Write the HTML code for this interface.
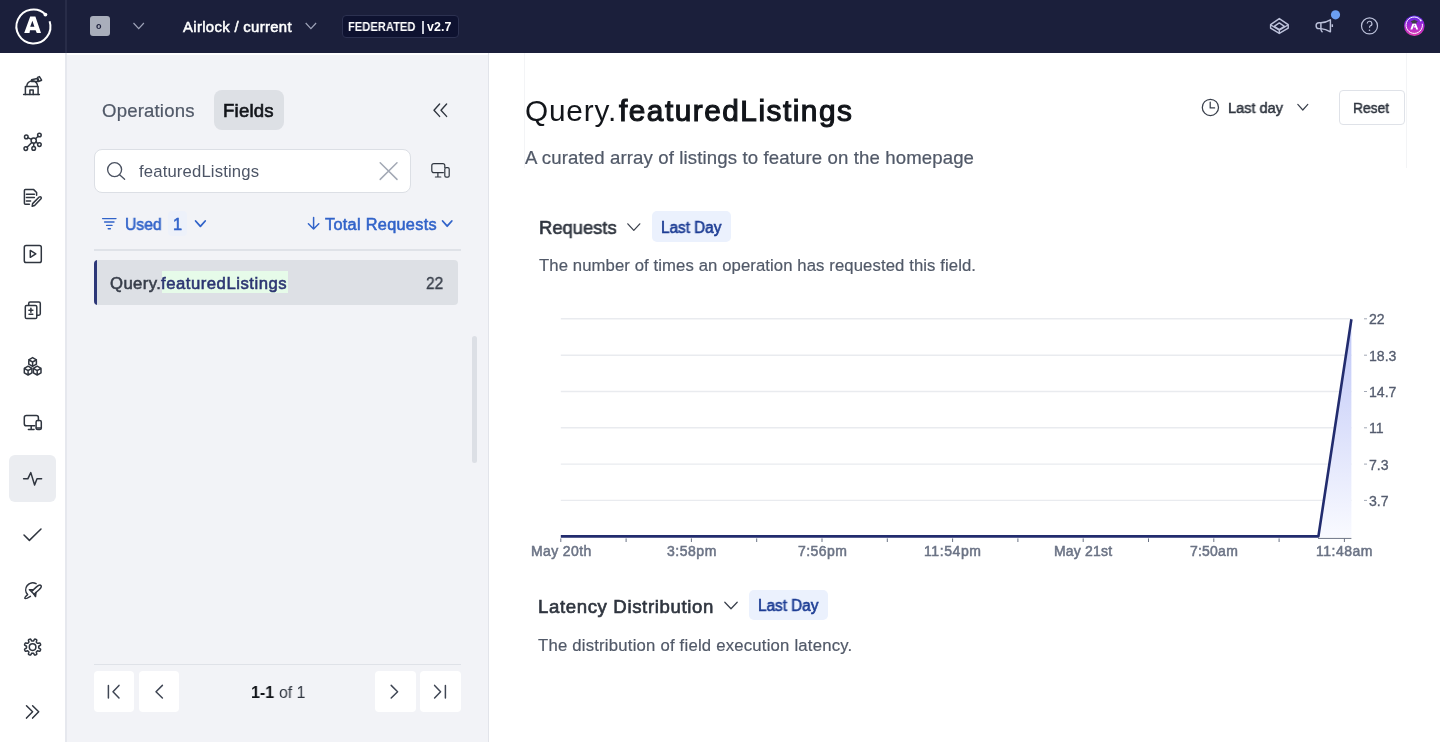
<!DOCTYPE html>
<html><head><meta charset="utf-8">
<style>
*{box-sizing:border-box;margin:0;padding:0}
html,body{width:1440px;height:742px;overflow:hidden;background:#fff;font-family:"Liberation Sans",sans-serif}
.a{position:absolute}
.t{position:absolute;white-space:pre;line-height:1;font-family:"Liberation Sans",sans-serif;will-change:transform}
svg{position:absolute;overflow:visible}
</style></head><body>
<!-- header -->
<div class="a" style="left:0;top:0;width:1440px;height:53px;background:#1b1f3b"></div>
<div class="a" style="left:65px;top:0;width:2px;height:53px;background:#282c48"></div>
<!-- apollo logo -->
<svg style="left:0;top:0" width="66" height="53" viewBox="0 0 66 53">
  <path d="M45.6 14.6 A17 17 0 1 0 49.6 21.2" fill="none" stroke="#fff" stroke-width="2"/>
  <circle cx="45.4" cy="14.6" r="1.9" fill="#fff"/>
  <path d="M30.2 16.6 L35.4 16.6 L41 33 L36.8 33 L35.6 30.2 L30 30.2 L29.5 33 L24.2 33 Z M32.4 20.8 L34.4 26.7 L30.2 26.7 Z" fill="#fff" fill-rule="evenodd"/>
</svg>
<!-- org box -->
<div class="a" style="left:90px;top:16px;width:20px;height:20px;border-radius:3px;background:#a9aebb"></div>
<svg style="left:0;top:0" width="1440" height="53">
  <path d="M133.5 23 L138.7 28.6 L143.9 23" fill="none" stroke="#9ea3b8" stroke-width="1.2"/>
  <path d="M305.7 23 L310.9 28.6 L316.1 23" fill="none" stroke="#9ea3b8" stroke-width="1.2"/>
</svg>
<!-- federated badge -->
<div class="a" style="left:342px;top:14.5px;width:117px;height:23px;border-radius:4px;background:#0e1230;border:1px solid #2c3150"></div>
<div class="a" style="left:422px;top:20.5px;width:2px;height:13px;background:#c9ccd6"></div>
<!-- right header icons -->
<svg style="left:0;top:0" width="1440" height="53">
  <g fill="none" stroke="#bcc1da" stroke-width="1.45" stroke-linejoin="round">
    <path d="M1279.3 18.6 L1288.2 24.7 V28.2 L1279.3 33.4 L1270.6 28.2 V24.7 Z"/>
    <path d="M1270.8 25 L1279.3 30.2 L1288 25 M1279.3 30.2 V33.2"/>
    <path d="M1279.3 22.9 L1284.4 26.3 L1279.3 29.6 L1274.2 26.3 Z"/>
    <path d="M1320.9 22.8 Q1325.6 22.6 1330.4 19.8 V31.8 Q1325.6 28.9 1320.9 28.6 Z"/>
    <path d="M1320.9 22.8 H1319 A2.9 2.9 0 0 0 1319 28.6 H1320.9"/>
    <path d="M1320.8 28.8 Q1321 31 1322.5 32.3"/>
    <path d="M1332.3 24.3 V27" stroke-width="1.5"/>
    <circle cx="1369.5" cy="25.9" r="8" stroke-width="1.2"/>
    <path d="M1367.2 23.6 A2.35 2.35 0 1 1 1370.4 25.8 Q1369.5 26.3 1369.5 27.8" stroke-width="1.2"/>
  </g>
  <circle cx="1369.5" cy="30.3" r="0.8" fill="#bcc1da"/>
  <circle cx="1335.5" cy="14.8" r="4.6" fill="#6b9ef2"/>
  <defs><linearGradient id="av" x1="0" y1="0" x2="0" y2="1"><stop offset="0" stop-color="#5b2ae8"/><stop offset="0.5" stop-color="#a524d2"/><stop offset="1" stop-color="#e040b0"/></linearGradient></defs>
  <circle cx="1414.3" cy="25.7" r="10.3" fill="url(#av)"/>
  <path d="M1421 20.6 A8.2 8.2 0 1 0 1422.3 23.8" fill="none" stroke="#fff" stroke-width="1"/>
  <circle cx="1420.7" cy="20.4" r="0.9" fill="#fff"/>
  <path d="M1412.6 23.2 L1415.8 23.2 L1418.2 29.4 L1416.2 29.4 L1415.6 27.6 L1413.6 27.6 L1414 26.2 L1415 26.2 L1414.2 24.4 L1412.4 29.4 L1410.4 29.4 Z" fill="#fff"/>
  <path d="M1410.4 21.4 L1414.2 19.8 L1418 21.4 L1416.6 22.2 V23.4 H1411.8 V22.2 Z" fill="#3c3c48"/>
</svg>

<!-- sidebar -->
<div class="a" style="left:0;top:53px;width:65px;height:689px;background:#fff"></div>
<div class="a" style="left:65px;top:53px;width:2px;height:689px;background:#e6e8ee"></div>
<div class="a" style="left:9px;top:455px;width:47px;height:47px;border-radius:6px;background:#ebedf1"></div>
<svg style="left:0;top:0" width="66" height="742">
 <g fill="none" stroke="#2f353f" stroke-width="1.5" stroke-linecap="round" stroke-linejoin="round">
  <!-- observatory y0=72 -->
  <g transform="translate(20 72)">
    <path d="M3.6 22.4 H19.4"/>
    <path d="M5.4 22.4 V14.6 H18.1 V22.4"/>
    <path d="M9.9 22.4 V18 H13.2 V22.4"/>
    <path d="M6.8 14.6 A5.6 5.6 0 0 1 16.2 10.4"/>
    <path d="M17.6 14.6 A5.6 5.6 0 0 0 16.2 10.4"/>
    <path d="M11.4 9.6 L11.6 7.8 L17.2 6.6 L18.2 9.6 Z"/>
    <path d="M17.6 5.4 L19.4 4.6 L21.6 8.2 L19 9.4 Z"/>
  </g>
  <!-- graph y0=129 -->
  <g transform="translate(20 129)">
    <circle cx="13.7" cy="11.6" r="2.6"/>
    <circle cx="6.3" cy="7.9" r="1.8"/>
    <circle cx="19.4" cy="6.0" r="1.8"/>
    <circle cx="19.4" cy="15.6" r="1.8"/>
    <circle cx="13.7" cy="19.4" r="1.8"/>
    <circle cx="5.8" cy="19.6" r="1.8"/>
    <path d="M7.9 8.7 L11.4 10.4 M15.6 9.7 L18.1 7.3 M16.2 12.8 L17.7 14.7 M13.7 14.2 V17.6 M11.8 13.5 L7.1 18.3"/>
  </g>
  <!-- doc edit y0=185 -->
  <g transform="translate(20 185)">
    <path d="M9.4 19.3 H5.4 Q4.4 19.3 4.4 18.3 V5.6 Q4.4 4.6 5.4 4.6 H13.7 L16.6 7.5 V10.2"/>
    <path d="M6.4 9.3 H14.4 M6.4 12.6 H14.4 M6.4 16.1 H10.6"/>
    <path d="M12.2 21.2 L12.6 18.6 L19.2 12 Q20.2 11.3 21 12.1 Q21.7 13 21 13.8 L14.6 20.6 Z"/>
  </g>
  <!-- play y0=241 -->
  <g transform="translate(20 241)">
    <rect x="4.3" y="4.6" width="17" height="16.9" rx="1.8"/>
    <path d="M10.3 9.4 L15.8 12.9 L10.3 16.3 Z"/>
  </g>
  <!-- copy y0=297 -->
  <g transform="translate(20 297)">
    <path d="M8.7 8.3 V6.4 Q8.7 5 10.1 5 H18.9 Q20.3 5 20.3 6.4 V16.8 Q20.3 18.2 18.9 18.2 H16.8"/>
    <rect x="5.3" y="8.4" width="11.5" height="13.2" rx="1.4"/>
    <path d="M8.9 13.3 H12.9 M10.9 11.3 V15.3 M9 17.3 H12.8"/>
  </g>
  <!-- cubes y0=354 -->
  <g transform="translate(20 354)">
    <path d="M12.6 3.6 L16.4 5.8 V10.2 L12.6 12.4 L8.8 10.2 V5.8 Z M8.8 5.8 L12.6 8 L16.4 5.8 M12.6 8 V12.4"/>
    <path d="M8.1 12.2 L11.9 14.4 V18.8 L8.1 21 L4.3 18.8 V14.4 Z M4.3 14.4 L8.1 16.6 L11.9 14.4 M8.1 16.6 V21"/>
    <path d="M17.2 12.2 L21 14.4 V18.8 L17.2 21 L13.4 18.8 V14.4 Z M13.4 14.4 L17.2 16.6 L21 14.4 M17.2 16.6 V21"/>
  </g>
  <!-- monitor y0=410 -->
  <g transform="translate(20 410)">
    <path d="M14.8 15.8 H6.4 Q4.3 15.8 4.3 13.7 V7.7 Q4.3 5.6 6.4 5.6 H16.3 Q18.4 5.6 18.4 7.7 V10.4"/>
    <path d="M11.2 15.8 V19.6 M8.4 19.6 H14"/>
    <rect x="16.1" y="10.5" width="5.2" height="9.1" rx="1.6"/>
    <path d="M16.4 18 H21"/>
  </g>
  <!-- activity -->
  <path d="M23.6 478.8 H27.8 L30.8 472.6 L34.6 485 L37 478.8 H41.6"/>
  <!-- check -->
  <path d="M24 535 L29.4 540.4 L41 529"/>
  <!-- rocket y0=578 -->
  <g transform="translate(20 578)">
    <path d="M16.1 5.7 A7 7 0 0 0 7.6 16.6"/>
    <path d="M7.2 17 Q4.4 19.4 4.9 20.4 Q5.6 21.3 10.4 18.3"/>
    <g transform="translate(16.6 11.4) rotate(-42)">
      <path d="M-5.2 -1.9 H1.6 Q5.8 -1.9 5.8 0 Q5.8 1.9 1.6 1.9 H-5.2 Z"/>
      <path d="M-2.6 -1.9 L-5.6 -4.6 L-5.2 -1.9 M-2.6 1.9 L-5.6 4.6 L-5.2 1.9"/>
    </g>
  </g>
  <!-- gear y0=634 -->
  <g transform="translate(20 634)">
    <circle cx="12.6" cy="13.1" r="3.3"/>
    <path d="M18.70 13.10 L18.70 13.25 L18.70 13.40 L18.69 13.55 L18.69 13.70 L18.71 13.85 L18.79 14.02 L19.03 14.22 L19.54 14.48 L20.13 14.79 L20.48 15.07 L20.59 15.31 L20.60 15.53 L20.56 15.73 L20.50 15.93 L20.43 16.12 L20.35 16.31 L20.27 16.50 L20.18 16.69 L20.08 16.87 L19.97 17.04 L19.82 17.19 L19.57 17.28 L19.12 17.23 L18.49 17.03 L17.94 16.86 L17.63 16.83 L17.46 16.89 L17.33 16.99 L17.23 17.09 L17.12 17.20 L17.02 17.31 L16.92 17.42 L16.81 17.52 L16.70 17.62 L16.59 17.73 L16.49 17.83 L16.39 17.96 L16.33 18.13 L16.36 18.44 L16.53 18.99 L16.73 19.62 L16.78 20.07 L16.69 20.32 L16.54 20.47 L16.37 20.58 L16.19 20.68 L16.00 20.77 L15.81 20.85 L15.62 20.93 L15.43 21.00 L15.23 21.06 L15.03 21.10 L14.81 21.09 L14.57 20.98 L14.29 20.63 L13.98 20.04 L13.72 19.53 L13.52 19.29 L13.35 19.21 L13.20 19.19 L13.05 19.19 L12.90 19.20 L12.75 19.20 L12.60 19.20 L12.45 19.20 L12.30 19.20 L12.15 19.19 L12.00 19.19 L11.85 19.21 L11.68 19.29 L11.48 19.53 L11.22 20.04 L10.91 20.63 L10.63 20.98 L10.39 21.09 L10.17 21.10 L9.97 21.06 L9.77 21.00 L9.58 20.93 L9.39 20.85 L9.20 20.77 L9.01 20.68 L8.83 20.58 L8.66 20.47 L8.51 20.32 L8.42 20.07 L8.47 19.62 L8.67 18.99 L8.84 18.44 L8.87 18.13 L8.81 17.96 L8.71 17.83 L8.61 17.73 L8.50 17.62 L8.39 17.52 L8.28 17.42 L8.18 17.31 L8.08 17.20 L7.97 17.09 L7.87 16.99 L7.74 16.89 L7.57 16.83 L7.26 16.86 L6.71 17.03 L6.08 17.23 L5.63 17.28 L5.38 17.19 L5.23 17.04 L5.12 16.87 L5.02 16.69 L4.93 16.50 L4.85 16.31 L4.77 16.12 L4.70 15.93 L4.64 15.73 L4.60 15.53 L4.61 15.31 L4.72 15.07 L5.07 14.79 L5.66 14.48 L6.17 14.22 L6.41 14.02 L6.49 13.85 L6.51 13.70 L6.51 13.55 L6.50 13.40 L6.50 13.25 L6.50 13.10 L6.50 12.95 L6.50 12.80 L6.51 12.65 L6.51 12.50 L6.49 12.35 L6.41 12.18 L6.17 11.98 L5.66 11.72 L5.07 11.41 L4.72 11.13 L4.61 10.89 L4.60 10.67 L4.64 10.47 L4.70 10.27 L4.77 10.08 L4.85 9.89 L4.93 9.70 L5.02 9.51 L5.12 9.33 L5.23 9.16 L5.38 9.01 L5.63 8.92 L6.08 8.97 L6.71 9.17 L7.26 9.34 L7.57 9.37 L7.74 9.31 L7.87 9.21 L7.97 9.11 L8.08 9.00 L8.18 8.89 L8.28 8.78 L8.39 8.68 L8.50 8.58 L8.61 8.47 L8.71 8.37 L8.81 8.24 L8.87 8.07 L8.84 7.76 L8.67 7.21 L8.47 6.58 L8.42 6.13 L8.51 5.88 L8.66 5.73 L8.83 5.62 L9.01 5.52 L9.20 5.43 L9.39 5.35 L9.58 5.27 L9.77 5.20 L9.97 5.14 L10.17 5.10 L10.39 5.11 L10.63 5.22 L10.91 5.57 L11.22 6.16 L11.48 6.67 L11.68 6.91 L11.85 6.99 L12.00 7.01 L12.15 7.01 L12.30 7.00 L12.45 7.00 L12.60 7.00 L12.75 7.00 L12.90 7.00 L13.05 7.01 L13.20 7.01 L13.35 6.99 L13.52 6.91 L13.72 6.67 L13.98 6.16 L14.29 5.57 L14.57 5.22 L14.81 5.11 L15.03 5.10 L15.23 5.14 L15.43 5.20 L15.62 5.27 L15.81 5.35 L16.00 5.43 L16.19 5.52 L16.37 5.62 L16.54 5.73 L16.69 5.88 L16.78 6.13 L16.73 6.58 L16.53 7.21 L16.36 7.76 L16.33 8.07 L16.39 8.24 L16.49 8.37 L16.59 8.47 L16.70 8.58 L16.81 8.68 L16.92 8.78 L17.02 8.89 L17.12 9.00 L17.23 9.11 L17.33 9.21 L17.46 9.31 L17.63 9.37 L17.94 9.34 L18.49 9.17 L19.12 8.97 L19.57 8.92 L19.82 9.01 L19.97 9.16 L20.08 9.33 L20.18 9.51 L20.27 9.70 L20.35 9.89 L20.43 10.08 L20.50 10.27 L20.56 10.47 L20.60 10.67 L20.59 10.89 L20.48 11.13 L20.13 11.41 L19.54 11.72 L19.03 11.98 L18.79 12.18 L18.71 12.35 L18.69 12.50 L18.69 12.65 L18.70 12.80 L18.70 12.95 Z"/>
  </g>
  <!-- chevrons y0=699 -->
  <g transform="translate(20 699)">
    <path d="M6.5 6.7 L12.6 12.8 L6.5 19.1 M12.6 6.7 L18.7 12.8 L12.6 19.1"/>
  </g>
 </g>
</svg>

<!-- left panel -->
<div class="a" style="left:67px;top:55px;width:421px;height:687px;background:#f2f3f7"></div>
<div class="a" style="left:487.5px;top:53px;width:1.5px;height:689px;background:#e2e4ea"></div>
<div class="a" style="left:214px;top:89.5px;width:70px;height:40px;border-radius:8px;background:#dde0e5"></div>
<!-- search -->
<div class="a" style="left:94px;top:148.5px;width:317px;height:44px;border-radius:8px;background:#fff;border:1px solid #dcdfe5"></div>
<svg style="left:0;top:0" width="488" height="742">
  <g fill="none" stroke-linecap="round" stroke-linejoin="round">
    <!-- collapse « -->
    <path d="M439.6 104 L434 110.2 L439.6 116.4 M446.6 104 L441 110.2 L446.6 116.4" stroke="#2f353f" stroke-width="1.4"/>
    <!-- search icon -->
    <circle cx="114.6" cy="169.6" r="7" stroke="#4a5160" stroke-width="1.35"/>
    <path d="M119.6 174.8 L124.6 179.2" stroke="#4a5160" stroke-width="1.35"/>
    <!-- X -->
    <path d="M380.2 162.8 L397 179.4 M397 162.8 L380.2 179.4" stroke="#a3a9b5" stroke-width="1.5"/>
    <!-- monitor small -->
    <path d="M443.4 172.6 H434 Q431.8 172.6 431.8 170.4 V165.6 Q431.8 163.6 434 163.6 H442.8 Q444.8 163.6 444.8 165.6 V167.4" stroke="#2f353f" stroke-width="1.2"/>
    <path d="M437.9 172.6 V176.8 M435.4 177 H440.8" stroke="#2f353f" stroke-width="1.2"/>
    <rect x="444.8" y="167.6" width="4.4" height="9.6" rx="1.4" stroke="#2f353f" stroke-width="1.2"/>
    <!-- filter icon -->
    <path d="M102.6 218.6 H116 M104.6 222 H114 M106.6 225.4 H112 M108.2 228.8 H110.4" stroke="#3163c9" stroke-width="1.4"/>
    <!-- used chevron -->
    <path d="M195.6 221 L200.4 226.4 L205.2 221" stroke="#3163c9" stroke-width="1.8"/>
    <!-- arrow down -->
    <path d="M313.6 217.6 V229 M308.4 223.8 L313.6 229 L318.8 223.8" stroke="#3163c9" stroke-width="1.5"/>
    <path d="M442.6 221 L447.2 226.2 L451.8 221" stroke="#3163c9" stroke-width="1.8"/>
  </g>
</svg>
<div class="a" style="left:168px;top:210.5px;width:18.5px;height:25px;border-radius:4px;background:#edf1fa"></div>
<div class="a" style="left:93.5px;top:249px;width:367.5px;height:1.5px;background:#dfe2e8"></div>
<!-- row -->
<div class="a" style="left:93.5px;top:259.5px;width:364.3px;height:45px;border-radius:4px;background:#dde0e5;overflow:hidden"><div class="a" style="left:0;top:0;width:3.2px;height:45px;background:#2d3778"></div></div>
<div class="a" style="left:162px;top:270.6px;width:126px;height:22.7px;background:#e6fbe9"></div>
<!-- scrollbar -->
<div class="a" style="left:471.6px;top:336px;width:5.2px;height:126.5px;border-radius:3px;background:#dcdfe5"></div>
<!-- pagination -->
<div class="a" style="left:93.5px;top:663.5px;width:367.5px;height:1.5px;background:#dfe2e8"></div>
<div class="a" style="left:93.5px;top:671.2px;width:40.7px;height:40.4px;border-radius:4px;background:#fff"></div>
<div class="a" style="left:138.6px;top:671.2px;width:40.3px;height:40.4px;border-radius:4px;background:#fff"></div>
<div class="a" style="left:374.7px;top:671.2px;width:41.1px;height:40.4px;border-radius:4px;background:#fff"></div>
<div class="a" style="left:420px;top:671.2px;width:40.8px;height:40.4px;border-radius:4px;background:#fff"></div>
<svg style="left:0;top:0" width="488" height="742">
  <g fill="none" stroke="#3f4654" stroke-width="1.5" stroke-linecap="round" stroke-linejoin="round">
    <path d="M108.4 685.4 V698 M119 685.4 L113 691.7 L119 698"/>
    <path d="M162.4 685.4 L156 691.7 L162.4 698"/>
    <path d="M391.2 685.4 L397.6 691.7 L391.2 698"/>
    <path d="M434.6 685.4 L440.6 691.7 L434.6 698 M445.4 685.4 V698"/>
  </g>
</svg>

<!-- main -->
<div class="a" style="left:524px;top:53px;width:1px;height:115px;background:#f3f4f6"></div>
<div class="a" style="left:1405.5px;top:53px;width:1px;height:115px;background:#f3f4f6"></div>
<div class="a" style="left:1339.2px;top:89.7px;width:66.3px;height:35.6px;border-radius:4px;background:#fff;border:1px solid #dfe2e8"></div>
<svg style="left:0;top:0" width="1440" height="742">
  <g fill="none" stroke-linecap="round" stroke-linejoin="round">
    <circle cx="1210.4" cy="107.4" r="8.1" stroke="#3a404c" stroke-width="1.25"/>
    <path d="M1210.2 102.2 V107.9 H1214.6" stroke="#3a404c" stroke-width="1.25"/>
    <path d="M1297.8 104.4 L1302.8 110 L1307.8 104.4" stroke="#3a404c" stroke-width="1.2"/>
    <path d="M627.8 223.8 L633.8 230.4 L639.8 223.8" stroke="#3a404c" stroke-width="1.25"/>
    <path d="M724.8 602.2 L731 608.8 L737.2 602.2" stroke="#3a404c" stroke-width="1.25"/>
  </g>
</svg>
<div class="a" style="left:651.7px;top:211.2px;width:79.2px;height:31.1px;border-radius:5px;background:#ebf1fd"></div>
<div class="a" style="left:749.3px;top:589.8px;width:79.2px;height:30.5px;border-radius:5px;background:#ebf1fd"></div>

<!-- chart -->
<svg style="left:0;top:0" width="1440" height="742">
  <defs><linearGradient id="fg" x1="0" y1="0" x2="0" y2="1"><stop offset="0" stop-color="#bec6f7"/><stop offset="1" stop-color="#f9faff"/></linearGradient></defs>
  <g stroke="#e9ebef" stroke-width="1.4">
    <path d="M560.8 318.8 H1351.5 M560.8 355.2 H1351.5 M560.8 391.5 H1351.5 M560.8 427.8 H1351.5 M560.8 464.1 H1351.5 M560.8 500.4 H1351.5"/>
  </g>
  <path d="M1318.4 537 L1351.4 319.2 L1351.4 537 Z" fill="url(#fg)"/>
  <path d="M1318 538.4 H1351.4" stroke="#6b7385" stroke-width="1"/>
  <g stroke="#6b7385" stroke-width="1"><path d="M560.8 538.4 V542"/><path d="M626.1 538.4 V542"/><path d="M691.4 538.4 V542"/><path d="M756.7 538.4 V542"/><path d="M822.0 538.4 V542"/><path d="M887.3 538.4 V542"/><path d="M952.6 538.4 V542"/><path d="M1017.9 538.4 V542"/><path d="M1083.2 538.4 V542"/><path d="M1148.5 538.4 V542"/><path d="M1213.8 538.4 V542"/><path d="M1279.1 538.4 V542"/><path d="M1344.4 538.4 V542"/></g>
  <path d="M560.8 536.4 H1318.4 L1351.4 319.2" fill="none" stroke="#222c6e" stroke-width="2.6" stroke-linejoin="round"/>
  <g stroke="#a2a8b5" stroke-width="1"><path d="M1364 318.8 H1367"/><path d="M1364 355.2 H1367"/><path d="M1364 391.5 H1367"/><path d="M1364 427.8 H1367"/><path d="M1364 464.1 H1367"/><path d="M1364 500.4 H1367"/></g>
</svg>
<span class="t" style="left:182.80px;top:20.00px;font-size:14.9px;font-weight:400;-webkit-text-stroke:0.51px #ffffff;color:#ffffff;letter-spacing:0.323px;">Airlock / current</span>
<span class="t" style="left:347.80px;top:21.00px;font-size:12.4px;font-weight:700;color:#ffffff;letter-spacing:0.000px;transform:scaleX(0.9023);transform-origin:0 0;">FEDERATED</span>
<span class="t" style="left:427.00px;top:21.00px;font-size:12.4px;font-weight:700;color:#ffffff;letter-spacing:0.058px;">v2.7</span>
<span class="t" style="left:96.20px;top:22.00px;font-size:9px;font-weight:700;color:#1b1f3b;letter-spacing:0.000px;">o</span>
<span class="t" style="left:102.00px;top:102.00px;font-size:18.6px;font-weight:400;-webkit-text-stroke:0.22px #515968;color:#515968;letter-spacing:0.170px;">Operations</span>
<span class="t" style="left:223.10px;top:102.00px;font-size:18.6px;font-weight:400;-webkit-text-stroke:0.63px #12151a;color:#12151a;letter-spacing:0.198px;">Fields</span>
<span class="t" style="left:139.20px;top:164.00px;font-size:16.7px;font-weight:400;color:#4d5566;letter-spacing:0.145px;">featuredListings</span>
<span class="t" style="left:125.10px;top:216.00px;font-size:16.3px;font-weight:400;-webkit-text-stroke:0.55px #3163c9;color:#3163c9;letter-spacing:0.000px;transform:scaleX(0.9628);transform-origin:0 0;">Used</span>
<span class="t" style="left:173.00px;top:216.00px;font-size:16.3px;font-weight:400;-webkit-text-stroke:0.55px #3163c9;color:#3163c9;letter-spacing:0.000px;">1</span>
<span class="t" style="left:325.40px;top:216.00px;font-size:16.3px;font-weight:400;-webkit-text-stroke:0.55px #3163c9;color:#3163c9;letter-spacing:0.300px;">Total Requests</span>
<span class="t" style="left:109.80px;top:276.00px;font-size:16.7px;font-weight:400;-webkit-text-stroke:0.57px #383e4a;color:#383e4a;letter-spacing:0.431px;">Query.</span>
<span class="t" style="left:161.40px;top:276.00px;font-size:16.7px;font-weight:400;-webkit-text-stroke:0.57px #2c3572;color:#2c3572;letter-spacing:0.518px;">featuredListings</span>
<span class="t" style="left:425.90px;top:276.00px;font-size:16.7px;font-weight:400;-webkit-text-stroke:0.33px #3a404c;color:#3a404c;letter-spacing:0.000px;transform:scaleX(0.9266);transform-origin:0 0;">22</span>
<span class="t" style="left:250.70px;top:685.00px;font-size:16.7px;font-weight:700;color:#12151a;letter-spacing:0.000px;transform:scaleX(0.9617);transform-origin:0 0;">1-1</span>
<span class="t" style="left:278.70px;top:685.00px;font-size:16.7px;font-weight:400;color:#2f353f;letter-spacing:0.000px;transform:scaleX(0.9481);transform-origin:0 0;">of 1</span>
<span class="t" style="left:525.10px;top:96.00px;font-size:29.8px;font-weight:400;color:#12151a;letter-spacing:0.796px;">Query.</span>
<span class="t" style="left:618.70px;top:96.00px;font-size:29.8px;font-weight:400;-webkit-text-stroke:1.13px #12151a;color:#12151a;letter-spacing:1.502px;">featuredListings</span>
<span class="t" style="left:525.10px;top:149.00px;font-size:18.6px;font-weight:400;-webkit-text-stroke:0.22px #515968;color:#515968;letter-spacing:0.124px;">A curated array of listings to feature on the homepage</span>
<span class="t" style="left:1228.40px;top:101.00px;font-size:14.9px;font-weight:400;-webkit-text-stroke:0.51px #2f353f;color:#2f353f;letter-spacing:0.000px;transform:scaleX(0.9770);transform-origin:0 0;">Last day</span>
<span class="t" style="left:1353.40px;top:101.00px;font-size:14.9px;font-weight:400;-webkit-text-stroke:0.51px #2f353f;color:#2f353f;letter-spacing:0.000px;transform:scaleX(0.9279);transform-origin:0 0;">Reset</span>
<span class="t" style="left:538.50px;top:219.00px;font-size:18.6px;font-weight:400;-webkit-text-stroke:0.63px #2f353f;color:#2f353f;letter-spacing:0.000px;transform:scaleX(0.9890);transform-origin:0 0;">Requests</span>
<span class="t" style="left:660.50px;top:220.00px;font-size:15.6px;font-weight:400;-webkit-text-stroke:0.59px #1d3d94;color:#1d3d94;letter-spacing:0.000px;transform:scaleX(0.9814);transform-origin:0 0;">Last Day</span>
<span class="t" style="left:538.50px;top:258.00px;font-size:16.7px;font-weight:400;-webkit-text-stroke:0.20px #515968;color:#515968;letter-spacing:0.099px;">The number of times an operation has requested this field.</span>
<span class="t" style="left:538.10px;top:598.00px;font-size:18.6px;font-weight:400;-webkit-text-stroke:0.63px #2f353f;color:#2f353f;letter-spacing:0.632px;">Latency Distribution</span>
<span class="t" style="left:758.10px;top:598.00px;font-size:15.6px;font-weight:400;-webkit-text-stroke:0.59px #1d3d94;color:#1d3d94;letter-spacing:0.000px;transform:scaleX(0.9814);transform-origin:0 0;">Last Day</span>
<span class="t" style="left:538.10px;top:638.00px;font-size:16.7px;font-weight:400;-webkit-text-stroke:0.20px #515968;color:#515968;letter-spacing:0.217px;">The distribution of field execution latency.</span>
<span class="t" style="left:530.70px;top:544.00px;font-size:14px;font-weight:400;-webkit-text-stroke:0.53px #6b7385;color:#6b7385;letter-spacing:0.372px;">May 20th</span>
<span class="t" style="left:666.75px;top:544.00px;font-size:14px;font-weight:400;-webkit-text-stroke:0.53px #6b7385;color:#6b7385;letter-spacing:0.519px;">3:58pm</span>
<span class="t" style="left:797.55px;top:544.00px;font-size:14px;font-weight:400;-webkit-text-stroke:0.53px #6b7385;color:#6b7385;letter-spacing:0.439px;">7:56pm</span>
<span class="t" style="left:924.10px;top:544.00px;font-size:14px;font-weight:400;-webkit-text-stroke:0.53px #6b7385;color:#6b7385;letter-spacing:0.591px;">11:54pm</span>
<span class="t" style="left:1054.15px;top:544.00px;font-size:14px;font-weight:400;-webkit-text-stroke:0.53px #6b7385;color:#6b7385;letter-spacing:0.184px;">May 21st</span>
<span class="t" style="left:1189.90px;top:544.00px;font-size:14px;font-weight:400;-webkit-text-stroke:0.53px #6b7385;color:#6b7385;letter-spacing:0.219px;">7:50am</span>
<span class="t" style="left:1316.20px;top:544.00px;font-size:14px;font-weight:400;-webkit-text-stroke:0.53px #6b7385;color:#6b7385;letter-spacing:0.491px;">11:48am</span>
<span class="t" style="left:1369.00px;top:312.00px;font-size:14.1px;font-weight:400;color:#545c6e;letter-spacing:0.000px;-webkit-text-stroke:0.3px #545c6e;">22</span>
<span class="t" style="left:1369.00px;top:349.00px;font-size:14.1px;font-weight:400;color:#545c6e;letter-spacing:0.000px;-webkit-text-stroke:0.3px #545c6e;">18.3</span>
<span class="t" style="left:1369.00px;top:385.00px;font-size:14.1px;font-weight:400;color:#545c6e;letter-spacing:0.000px;-webkit-text-stroke:0.3px #545c6e;">14.7</span>
<span class="t" style="left:1369.00px;top:421.00px;font-size:14.1px;font-weight:400;color:#545c6e;letter-spacing:0.000px;-webkit-text-stroke:0.3px #545c6e;">11</span>
<span class="t" style="left:1369.00px;top:458.00px;font-size:14.1px;font-weight:400;color:#545c6e;letter-spacing:0.000px;-webkit-text-stroke:0.3px #545c6e;">7.3</span>
<span class="t" style="left:1369.00px;top:494.00px;font-size:14.1px;font-weight:400;color:#545c6e;letter-spacing:0.000px;-webkit-text-stroke:0.3px #545c6e;">3.7</span>
</body></html>
